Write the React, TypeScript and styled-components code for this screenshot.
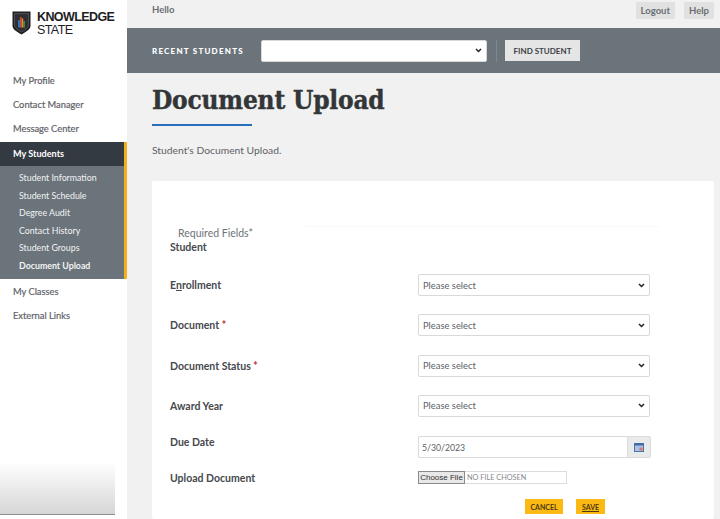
import React from "react";
import styled, { createGlobalStyle } from "styled-components";

const GlobalStyle = createGlobalStyle`
  html, body { margin: 0; padding: 0; height: 100%; overflow: hidden; background: #f1f1f1; }
  body { font-family: "Lato", "Noto Sans", sans-serif; }
  #root { height: 100%; }
  * { box-sizing: border-box; }
`;

const chevron = `url("data:image/svg+xml,%3Csvg xmlns='http://www.w3.org/2000/svg' width='7' height='5' viewBox='0 0 7 5'%3E%3Cpath d='M1 1 L3.5 3.5 L6 1' fill='none' stroke='%23222' stroke-width='1.5'/%3E%3C/svg%3E")`;

const Page = styled.div`
  width: 720px;
  height: 519px;
  display: flex;
  overflow: hidden;
`;

const Sidebar = styled.aside`
  width: 127px;
  flex-shrink: 0;
  height: 100%;
  background: #fff;
  display: flex;
  flex-direction: column;
`;

const Brand = styled.div`
  height: 68px;
  padding: 10px 0 0 12px;
  display: flex;
  gap: 6px;
`;

const BrandText = styled.div`
  font-family: "Liberation Sans", sans-serif;
  font-size: 12.5px;
  line-height: 13px;
  letter-spacing: -0.6px;
  color: #1d1d1f;
  padding-top: 1px;
`;

const BrandStrong = styled.div`
  font-weight: 700;
`;

const NavItem = styled.div`
  height: 24.4px;
  padding-left: 13px;
  display: flex;
  align-items: center;
  font-size: 9.3px;
  color: #5f6469;
  -webkit-text-stroke: 0.2px #5f6469;
`;

const Nav = styled.nav`
  display: flex;
  flex-direction: column;
`;

const ActiveItem = styled(NavItem)`
  height: 24px;
  margin-top: 1px;
  padding-bottom: 1px;
  background: #343a42;
  color: #fff;
  font-weight: 700;
  font-size: 9.1px;
  -webkit-text-stroke: 0;
  border-right: 3px solid #f5ae1c;
`;

const SubNav = styled.div`
  height: 113px;
  padding-top: 3px;
  background: #6b737b;
  border-right: 3px solid #f5ae1c;
`;

const SubItem = styled.div<{ $active?: boolean }>`
  height: 17.5px;
  padding-left: 19px;
  display: flex;
  align-items: center;
  font-size: ${(p) => (p.$active ? 8.8 : 8.8)}px;
  font-weight: ${(p) => (p.$active ? 700 : 400)};
  color: #f2f3f4;
`;

const SideFooter = styled.div`
  margin-top: auto;
  margin-bottom: 4px;
  width: 115px;
  height: 53px;
  background: linear-gradient(#fff, #d6d6d6);
  border-bottom: 1px solid #8e8e8e;
`;

const Main = styled.main`
  flex: 1;
  min-width: 0;
  display: flex;
  flex-direction: column;
`;

const TopBar = styled.div`
  height: 28px;
  padding: 2px 6px 0 25px;
  display: flex;
  align-items: flex-start;
  justify-content: space-between;
`;

const Hello = styled.div`
  font-size: 9.5px;
  font-weight: 700;
  line-height: 16px;
  color: #6a6f74;
`;

const TopActions = styled.div`
  display: flex;
  gap: 9px;
`;

const TopButton = styled.button`
  height: 17px;
  padding: 0 5px;
  border: 0;
  border-radius: 1px;
  background: #e1e1e1;
  font-family: inherit;
  font-size: 9.5px;
  font-weight: 700;
  color: #6a6f74;
`;

const RecentBar = styled.div`
  height: 45px;
  padding-left: 25px;
  background: #6b737b;
  display: flex;
  align-items: center;
`;

const RecentLabel = styled.div`
  width: 109px;
  font-size: 8px;
  font-weight: 900;
  letter-spacing: 1.22px;
  color: #fff;
  white-space: nowrap;
`;

const RecentSelect = styled.select`
  appearance: none;
  width: 226px;
  height: 22px;
  border: 1px solid #d8d8d8;
  border-radius: 2px;
  background: #fff ${chevron} no-repeat right 4px center;
`;

const Divider = styled.div`
  width: 1px;
  height: 22px;
  margin: 0 8px 0 9px;
  background: #7f878f;
`;

const FindButton = styled.button`
  width: 75px;
  height: 21px;
  padding: 0;
  border: 0;
  background: #e5e5e5;
  font-family: inherit;
  font-size: 8px;
  font-weight: 700;
  color: #3d4246;
`;

const Content = styled.div`
  flex: 1;
  min-height: 0;
  padding: 11px 6px 0 25px;
  display: flex;
  flex-direction: column;
`;

const Title = styled.h1`
  margin: 0;
  font-family: "DejaVu Serif Condensed", "DejaVu Serif", serif;
  font-stretch: condensed;
  font-size: 26px;
  line-height: 33px;
  font-weight: 700;
  letter-spacing: -0.2px;
  color: #333638;
  -webkit-text-stroke: 0.4px #333638;
  white-space: nowrap;
`;

const TitleRule = styled.div`
  width: 100px;
  height: 2px;
  margin-top: 7px;
  background: #2a6ebb;
`;

const Intro = styled.p`
  margin: 17px 0 0;
  font-size: 10.3px;
  line-height: 14px;
  color: #5c6166;
`;

const Card = styled.section`
  flex: 1;
  margin-top: 24px;
  padding: 45px 18px 0;
  background: #fff;
  border-radius: 2px;
`;

const FaintRule = styled.div`
  height: 1px;
  margin: 0 36px -1px 135px;
  background: #f8f8f8;
`;

const Required = styled.div`
  padding-left: 8px;
  font-size: 10.5px;
  line-height: 14px;
  color: #6d7277;
`;

const FormGrid = styled.div`
  padding-top: 11px;
`;

const Row = styled.div<{ $height: number }>`
  height: ${(p) => p.$height}px;
  display: grid;
  grid-template-columns: 248px 233px;
  align-items: center;
`;

const Label = styled.label`
  display: block;
  font-size: 10.5px;
  line-height: 14px;
  font-weight: 700;
  color: #45494d;
`;

const Star = styled.span`
  color: #c0272d;
`;

const FieldSelect = styled.select`
  appearance: none;
  width: 232px;
  height: 22px;
  padding: 0 0 0 4px;
  border: 1px solid #d9d9d9;
  border-radius: 2px;
  background: #fff ${chevron} no-repeat right 4px center;
  font-family: inherit;
  font-size: 9.4px;
  color: #5c6166;
`;

const DateGroup = styled.div`
  display: flex;
  height: 22px;
  margin-top: 10px;
`;

const DateInput = styled.input`
  width: 209px;
  padding: 0 3px;
  border: 1px solid #d9d9d9;
  border-right: 0;
  border-radius: 2px 0 0 2px;
  font-family: inherit;
  font-size: 8.7px;
  color: #5c6166;
`;

const DateAddon = styled.div`
  width: 24px;
  display: flex;
  align-items: center;
  justify-content: center;
  background: #e9eaeb;
  border: 1px solid #dcdcdc;
  border-radius: 0 2px 2px 0;
`;

const FilePicker = styled.div`
  width: 149px;
  height: 13px;
  display: flex;
  align-items: center;
  border: 1px solid #dcdcdc;
  border-left: 0;
`;

const ChooseButton = styled.button`
  width: 47px;
  height: 13px;
  margin-right: 2px;
  padding: 0;
  border: 1px solid #8a8a8a;
  background: #e8e8e8;
  font-family: "Liberation Sans", sans-serif;
  font-size: 8px;
  color: #333;
  flex-shrink: 0;
`;

const NoFile = styled.span`
  font-size: 7.3px;
  color: #85898d;
  white-space: nowrap;
`;

const Actions = styled.div`
  display: flex;
  gap: 13px;
  padding-left: 355px;
`;

const ActionButton = styled.button<{ $underline?: boolean; $width: number }>`
  width: ${(p) => p.$width}px;
  height: 15px;
  padding: 0;
  border: 0;
  background: #fdb913;
  font-family: inherit;
  font-size: 7px;
  font-weight: 700;
  color: #4a3a12;
  text-decoration: ${(p) => (p.$underline ? "underline" : "none")};
`;

const LogoMark = () => (
  <svg width="19" height="25" viewBox="0 0 19 25" aria-hidden="true">
    <path d="M0.5 1.5 H18.5 V16 C18.5 19.5 13 22.5 9.5 24.5 C6 22.5 0.5 19.5 0.5 16 Z" fill="#1f1f22" />
    <path d="M2.5 3.5 H16.5 V15.5 C16.5 18 12 20.5 9.5 22 C7 20.5 2.5 18 2.5 15.5 Z" fill="#2f2f33" stroke="#6a6b70" strokeWidth="0.6" />
    <rect x="6" y="10" width="2" height="7.5" fill="#2b6fc0" />
    <rect x="8" y="7" width="1.6" height="10.5" fill="#d8452e" />
    <rect x="9.6" y="8.5" width="1.6" height="9" fill="#e88b2a" />
    <rect x="11.2" y="11" width="1.6" height="6.5" fill="#3f9c55" />
  </svg>
);

const CalendarIcon = () => (
  <svg width="10" height="9" viewBox="0 0 10 9" aria-hidden="true">
    <rect x="0.5" y="0.5" width="9" height="8" fill="#a9c4e6" stroke="#4f76aa" />
    <rect x="0.5" y="0.5" width="9" height="2" fill="#3f69a3" />
    <rect x="5.5" y="4.5" width="3" height="3" fill="#d9796a" />
  </svg>
);

const subItems = ["Student Information", "Student Schedule", "Degree Audit", "Contact History", "Student Groups"];

const selectRows: { height: number; label: React.ReactNode }[] = [
  { height: 40, label: <>E<u>n</u>rollment</> },
  { height: 40.4, label: <>Document <Star>*</Star></> },
  { height: 40.4, label: <>Document Status <Star>*</Star></> },
  { height: 40.4, label: "Award Year" },
];

export default function App() {
  return (
    <>
      <GlobalStyle />
      <Page>
        <Sidebar>
          <Brand>
            <LogoMark />
            <BrandText>
              <BrandStrong>KNOWLEDGE</BrandStrong>
              STATE
            </BrandText>
          </Brand>
          <Nav>
            <NavItem>My Profile</NavItem>
            <NavItem>Contact Manager</NavItem>
            <NavItem>Message Center</NavItem>
            <ActiveItem>My Students</ActiveItem>
            <SubNav>
              {subItems.map((item) => (
                <SubItem key={item}>{item}</SubItem>
              ))}
              <SubItem $active>Document Upload</SubItem>
            </SubNav>
            <NavItem>My Classes</NavItem>
            <NavItem>External Links</NavItem>
          </Nav>
          <SideFooter />
        </Sidebar>
        <Main>
          <TopBar>
            <Hello>Hello</Hello>
            <TopActions>
              <TopButton>Logout</TopButton>
              <TopButton>Help</TopButton>
            </TopActions>
          </TopBar>
          <RecentBar>
            <RecentLabel>RECENT STUDENTS</RecentLabel>
            <RecentSelect />
            <Divider />
            <FindButton>FIND STUDENT</FindButton>
          </RecentBar>
          <Content>
            <Title>Document Upload</Title>
            <TitleRule />
            <Intro>Student's Document Upload.</Intro>
            <Card>
              <FaintRule />
              <Required>Required Fields*</Required>
              <Label>Student</Label>
              <FormGrid>
                {selectRows.map((row, i) => (
                  <Row key={i} $height={row.height}>
                    <Label>{row.label}</Label>
                    <FieldSelect>
                      <option>Please select</option>
                    </FieldSelect>
                  </Row>
                ))}
                <Row $height={30}>
                  <Label>Due Date</Label>
                  <DateGroup>
                    <DateInput defaultValue="5/30/2023" />
                    <DateAddon>
                      <CalendarIcon />
                    </DateAddon>
                  </DateGroup>
                </Row>
                <Row $height={43}>
                  <Label>Upload Document</Label>
                  <FilePicker>
                    <ChooseButton>Choose File</ChooseButton>
                    <NoFile>NO FILE CHOSEN</NoFile>
                  </FilePicker>
                </Row>
              </FormGrid>
              <Actions>
                <ActionButton $width={38}>CANCEL</ActionButton>
                <ActionButton $width={29} $underline>SAVE</ActionButton>
              </Actions>
            </Card>
          </Content>
        </Main>
      </Page>
    </>
  );
}
